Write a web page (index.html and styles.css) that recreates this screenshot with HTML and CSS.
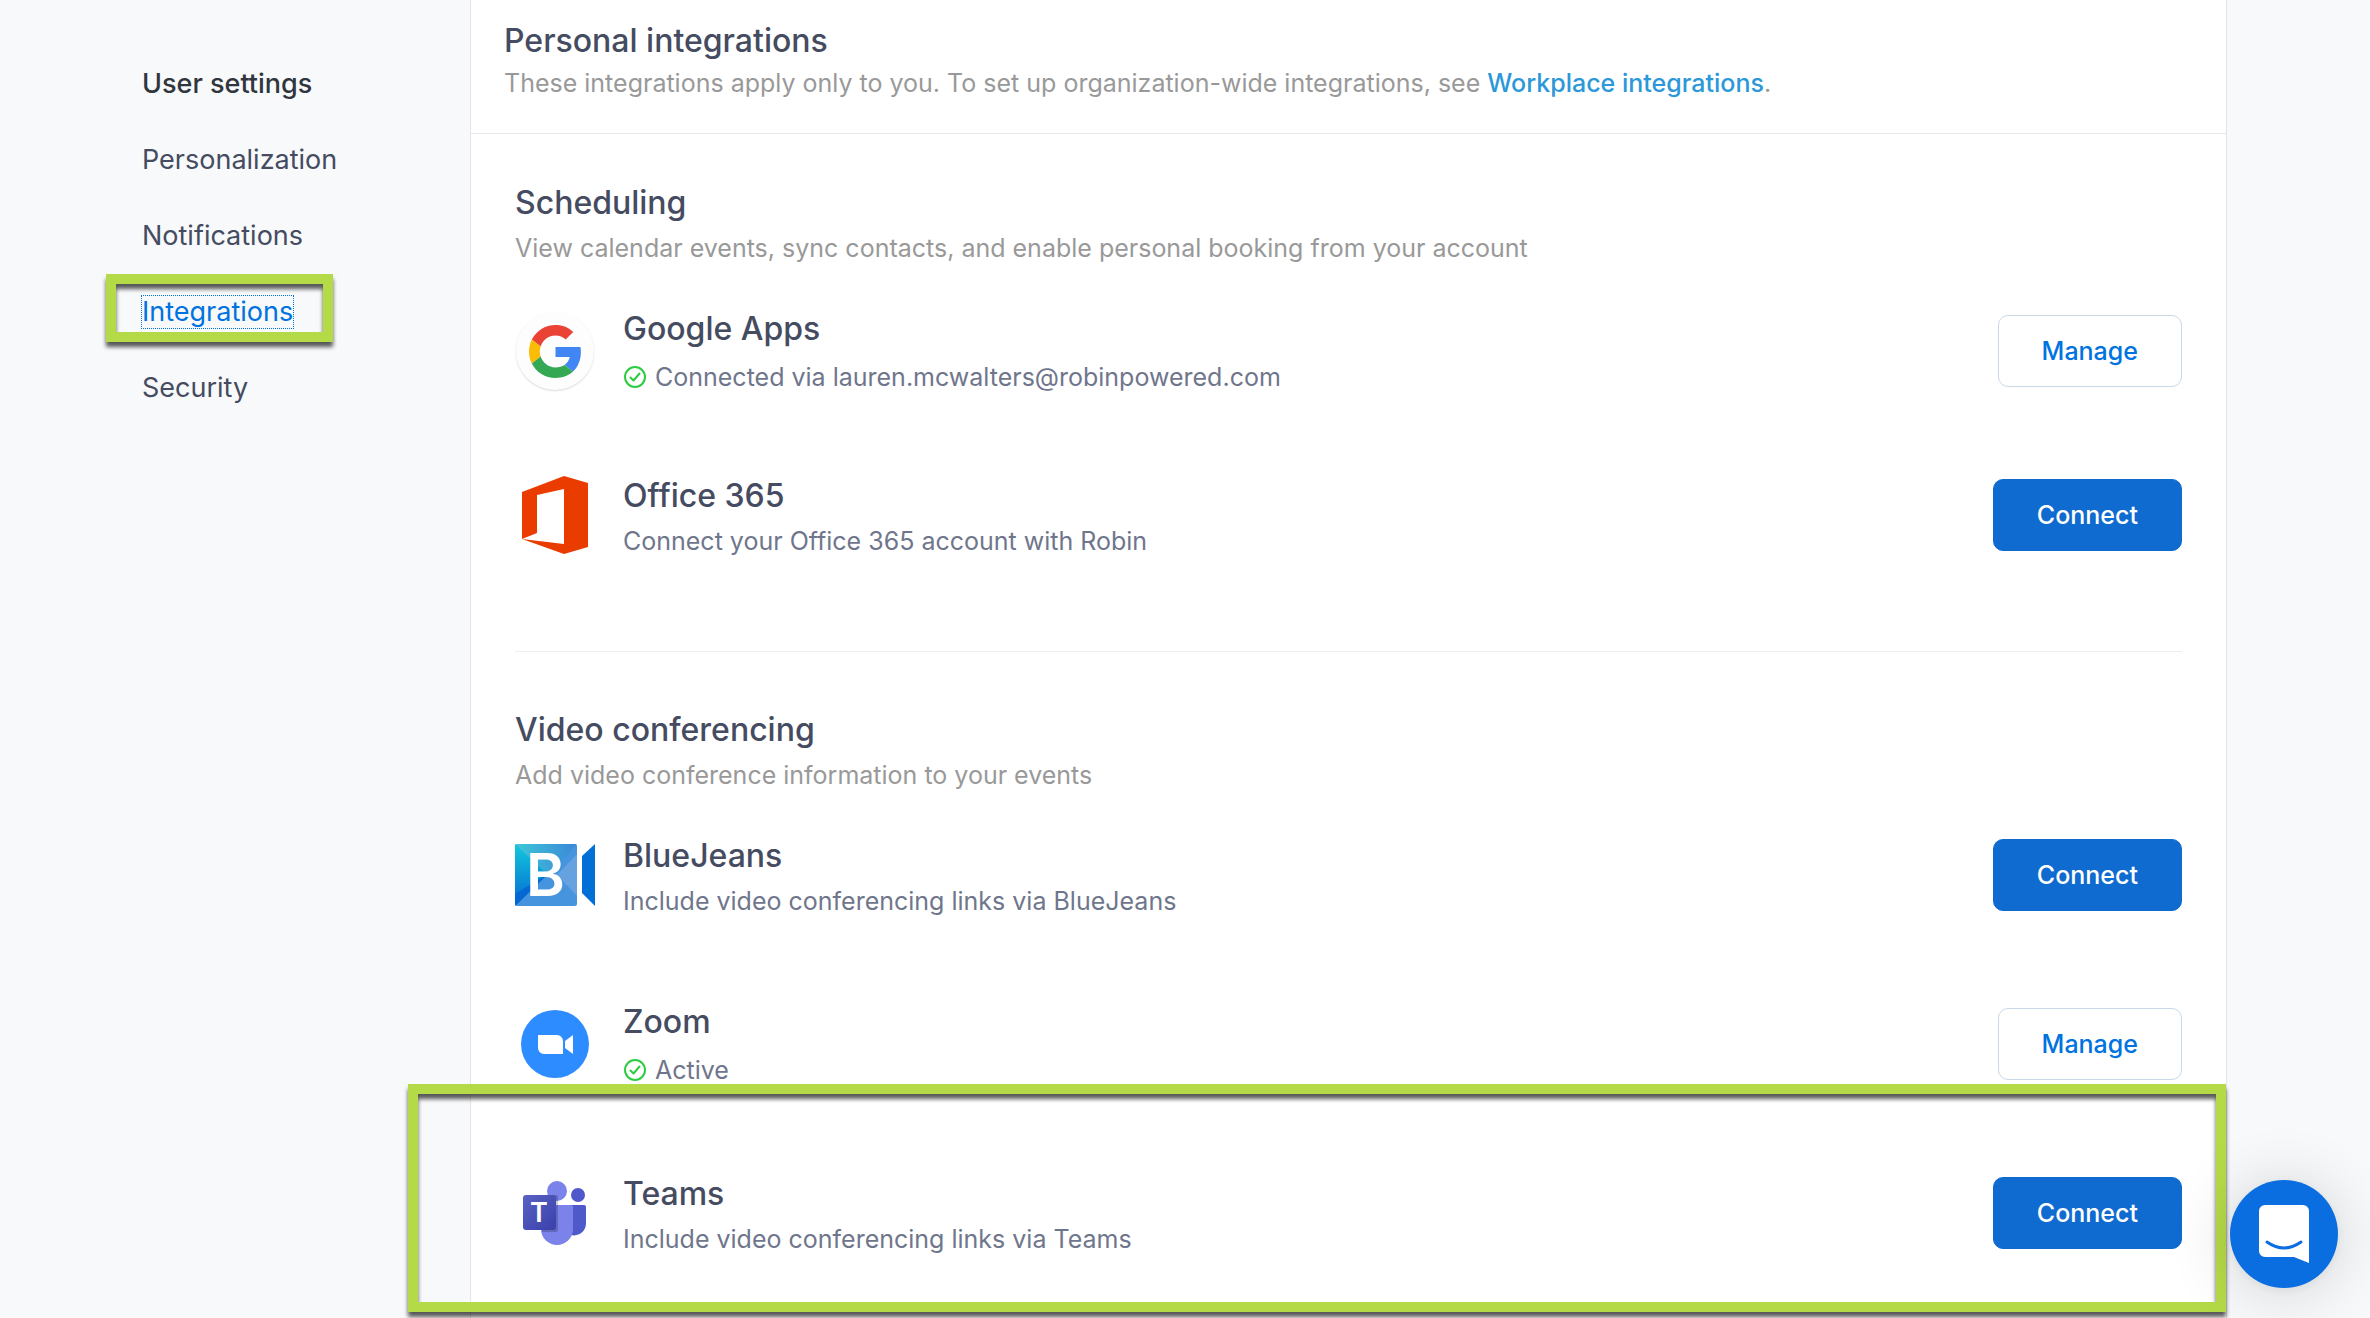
FILE: index.html
```html
<!DOCTYPE html>
<html lang="en">
<head>
  <meta charset="UTF-8" />
  <meta name="viewport" content="width=device-width, initial-scale=1" />
  <title>Personal integrations</title>
  <link rel="stylesheet" href="styles.css">
</head>
<body>
<div class="layout">
  <nav class="sidebar" aria-label="User settings">
    <h2>User settings</h2>
    <a href="#personalization">Personalization</a>
    <a href="#notifications">Notifications</a>
    <a href="#integrations" class="active" aria-current="page">Integrations<span class="highlight highlight-nav"></span></a>
    <a href="#security">Security</a>
  </nav>
  <main>
    <header class="panel-header">
      <h1>Personal integrations</h1>
      <p>These integrations apply only to you. To set up organization-wide integrations, see <a href="#workplace">Workplace integrations</a>.</p>
    </header>

    <section class="group scheduling">
      <h2>Scheduling</h2>
      <p class="group-desc">View calendar events, sync contacts, and enable personal booking from your account</p>
      <div class="items">
        <div class="item">
          <div class="logo logo-google">
            <svg width="53" height="53" viewBox="0 0 48 48" aria-hidden="true">
              <path fill="#ea4335" d="M24 9.500c3.540 0 6.710 1.220 9.210 3.600l6.850-6.850C35.900 2.380 30.470 0 24 0 14.620 0 6.510 5.380 2.560 13.220l7.980 6.190C12.430 13.720 17.740 9.500 24 9.500z"/>
              <path fill="#4285f4" d="M46.980 24.550c0-1.570-.15-3.090-.38-4.550H24v9.020h12.940c-.58 2.960-2.260 5.480-4.780 7.180l7.730 6c4.510-4.180 7.090-10.360 7.090-17.650z"/>
              <path fill="#fbbc05" d="M10.530 28.590c-.48-1.450-.76-2.990-.76-4.590s.27-3.140.76-4.590l-7.980-6.190C.92 16.460 0 20.120 0 24c0 3.880.92 7.540 2.560 10.780l7.970-6.190z"/>
              <path fill="#34a853" d="M24 48c6.480 0 11.930-2.130 15.890-5.810l-7.730-6c-2.150 1.450-4.920 2.300-8.160 2.300-6.260 0-11.570-4.220-13.470-9.910l-7.980 6.190C6.510 42.620 14.620 48 24 48z"/>
            </svg>
          </div>
          <div class="info">
            <h3>Google Apps</h3>
            <p class="status">
              <svg width="24" height="24" viewBox="0 0 24 24" aria-hidden="true"><circle cx="12" cy="12" r="10"/><path d="M7.500 12.500l3 3 6-7"/></svg>
              Connected via lauren.mcwalters@robinpowered.com
            </p>
          </div>
          <button class="btn btn-manage">Manage</button>
        </div>
        <div class="item">
          <div class="logo">
            <svg width="66" height="78" viewBox="0 0 66 78" aria-hidden="true">
              <path fill="#eb3c00" d="M0 63V16L42 0l24 7v64l-24 7L0 63l42 5V13L15 19v38z"/>
            </svg>
          </div>
          <div class="info">
            <h3>Office 365</h3>
            <p>Connect your Office 365 account with Robin</p>
          </div>
          <button class="btn btn-connect">Connect</button>
        </div>
      </div>
    </section>

    <section class="group video">
      <h2>Video conferencing</h2>
      <p class="group-desc">Add video conference information to your events</p>
      <div class="items">
        <div class="item">
          <div class="logo">
            <svg width="80" height="62" viewBox="0 0 80 62" aria-hidden="true">
              <defs>
                <linearGradient id="bj-left" x1="0" y1="0" x2="0" y2="1">
                  <stop offset="0" stop-color="#12c8dc"/><stop offset="1" stop-color="#0568d2"/>
                </linearGradient>
                <linearGradient id="bj-top" x1="0" y1="0" x2="1" y2="0">
                  <stop offset="0" stop-color="#3cc8d8"/><stop offset="1" stop-color="#3b87d8"/>
                </linearGradient>
                <clipPath id="bj-clip"><rect width="62" height="62" rx="2"/></clipPath>
              </defs>
              <g clip-path="url(#bj-clip)">
                <path fill="#4693de" d="M0 0h62v62H0z"/>
                <path fill="url(#bj-left)" d="M0 0l33 30L0 62z"/>
                <path fill="url(#bj-top)" d="M0 0h62L33 31z"/>
                <path fill="#0568d2" d="M33 30L0 62 0 50z"/>
                <path fill="#65a2df" d="M62 10v42L42 31z"/>
              </g>
              <text class="bj-letter" x="11" y="52">B</text>
              <path fill="#0070d6" d="M67 12L80 0v62L67 49z"/>
            </svg>
          </div>
          <div class="info">
            <h3>BlueJeans</h3>
            <p>Include video conferencing links via BlueJeans</p>
          </div>
          <button class="btn btn-connect">Connect</button>
        </div>
        <div class="item">
          <div class="logo">
            <svg width="68" height="68" viewBox="0 0 68 68" aria-hidden="true">
              <circle cx="34" cy="34" r="34" fill="#2d8cff"/>
              <path fill="#fff" d="M17 25h19a6 6 0 0 1 6 6v13H23a6 6 0 0 1-6-6zM44 31l8-6v19l-8-6z"/>
            </svg>
          </div>
          <div class="info">
            <h3>Zoom</h3>
            <p class="status">
              <svg width="24" height="24" viewBox="0 0 24 24" aria-hidden="true"><circle cx="12" cy="12" r="10"/><path d="M7.500 12.500l3 3 6-7"/></svg>
              Active
            </p>
          </div>
          <button class="btn btn-manage">Manage</button>
        </div>
        <div class="item">
          <div class="logo">
            <svg width="64" height="64" viewBox="0 0 64 64" aria-hidden="true">
              <defs>
                <linearGradient id="tm-tile" x1="0" y1="0" x2="1" y2="1">
                  <stop offset="0" stop-color="#5a62c3"/><stop offset="1" stop-color="#3940ab"/>
                </linearGradient>
              </defs>
              <circle cx="55" cy="14" r="7" fill="#5059c9"/>
              <path fill="#5059c9" d="M47 24h14a2 2 0 0 1 2 2v16a12 12 0 0 1-15 12z"/>
              <circle cx="34" cy="10" r="10" fill="#7b83eb"/>
              <path fill="#7b83eb" d="M18 24h30a2 2 0 0 1 2 2v22a16 16 0 0 1-32 0z"/>
              <path fill="#000" opacity=".2" d="M24 14h9a2 2 0 0 1 2 2v33a2 2 0 0 1-2 2H19V24z"/>
              <rect y="14" width="33" height="35" rx="3" fill="url(#tm-tile)"/>
              <text class="tm-letter" x="16" y="41" text-anchor="middle">T</text>
            </svg>
          </div>
          <div class="info">
            <h3>Teams</h3>
            <p>Include video conferencing links via Teams</p>
          </div>
          <button class="btn btn-connect">Connect</button>
          <span class="highlight highlight-item"></span>
        </div>
      </div>
    </section>
  </main>
</div>
<button class="chat" aria-label="Open chat">
  <svg width="50" height="58" viewBox="0 0 50 58" aria-hidden="true">
    <path fill="#fff" d="M6 0h38a6 6 0 0 1 6 6v52l-15-6H6a6 6 0 0 1-6-6V6a6 6 0 0 1 6-6z"/>
    <path fill="none" stroke="#0a6ee0" stroke-width="3" stroke-linecap="round" d="M8 37q17 12 34 0"/>
  </svg>
</button>
</body>
</html>
```
FILE: styles.css
```css
* {
  box-sizing: border-box;
}
body {
  margin: 0;
  font-family: Inter, sans-serif;
  font-size: 25px;
  line-height: 30px;
  background: #f8f9fb;
  color: #454b60;
}
h1, h2, h3, p {
  margin: 0;
}
h1, h2, h3 {
  font-size: 32px;
  line-height: 38px;
  font-weight: 500;
}
a {
  text-decoration: none;
}
.layout {
  display: flex;
  min-height: 100vh;
}
.sidebar {
  flex: 0 0 470px;
  display: flex;
  flex-direction: column;
  align-items: flex-start;
  gap: 44px;
  padding: 68px 0 0 142px;
  font-size: 27px;
  line-height: 32px;
}
.sidebar h2 {
  font-size: 27px;
  line-height: 32px;
  color: #30363d;
}
.sidebar a {
  color: #454b60;
}
.sidebar a.active {
  position: relative;
  color: #0073e0;
  outline: 1px dotted #0073e0;
}
main {
  flex: 1;
  margin-right: 143px;
  background: white;
  border: 1px solid #e3e4e6;
  border-width: 0 1px;
}
.panel-header {
  padding: 22px 33px 35px;
  border-bottom: 1px solid #e8e9ea;
}
.panel-header p, .group-desc {
  color: #999;
}
.panel-header p {
  margin-top: 8px;
}
.panel-header a {
  color: #2b98d9;
  font-weight: 500;
}
.group {
  margin: 0 44px;
}
.scheduling {
  padding: 50px 0 91px;
  border-bottom: 1px solid #eee;
}
.video {
  padding: 59px 0 60px;
}
.group-desc {
  margin-top: 11px;
}
.items {
  display: flex;
  flex-direction: column;
  gap: 74px;
  margin-top: 43px;
}
.video .items {
  gap: 79px;
  margin-top: 40px;
}
.item {
  position: relative;
  display: flex;
  align-items: center;
  gap: 28px;
  min-height: 90px;
}
.logo {
  flex: 0 0 80px;
  display: flex;
  justify-content: center;
}
.logo svg {
  display: block;
  overflow: visible;
}
.logo-google {
  flex-basis: 78px;
  height: 78px;
  margin: 0 1px;
  align-items: center;
  border-radius: 50%;
  background: #fdfdfd;
  box-shadow: 0 1px 2px rgba(0,0,0,0.15);
}
.bj-letter {
  font-size: 59px;
  font-weight: 600;
  fill: white;
}
.tm-letter {
  font-size: 27px;
  font-weight: 600;
  fill: white;
}
.info {
  flex: 1;
  padding-top: 2px;
}
.info p {
  margin-top: 11px;
  color: #6f768c;
}
.info .status {
  display: flex;
  align-items: center;
  gap: 8px;
  line-height: 36px;
}
.status svg {
  fill: none;
  stroke: #2ecc40;
  stroke-width: 2;
  stroke-linecap: round;
  stroke-linejoin: round;
}
.btn {
  height: 72px;
  padding: 0 43px;
  border: 1px solid #0f6bd0;
  border-radius: 10px;
  font: 500 25px/30px Inter, sans-serif;
  cursor: pointer;
}
.btn-connect {
  background: #0f6bd0;
  color: white;
}
.btn-manage {
  background: white;
  border-color: #c8d8e8;
  color: #0073e0;
}
.highlight {
  position: absolute;
  border: 10px solid #b5da47;
  filter: drop-shadow(0 5px 2px rgba(0,0,0,0.65));
  pointer-events: none;
}
.highlight-nav {
  inset: -22px -40px -14px -36px;
}
.highlight-item {
  inset: -84px -44px -54px -107px;
}
.chat {
  position: fixed;
  right: 32px;
  bottom: 30px;
  width: 108px;
  height: 108px;
  display: flex;
  align-items: center;
  justify-content: center;
  padding: 0;
  border: none;
  border-radius: 50%;
  background: #0a6ee0;
  box-shadow: 0 2px 12px rgba(0,0,0,0.06), 0 4px 64px rgba(0,0,0,0.16);
  cursor: pointer;
}
```
